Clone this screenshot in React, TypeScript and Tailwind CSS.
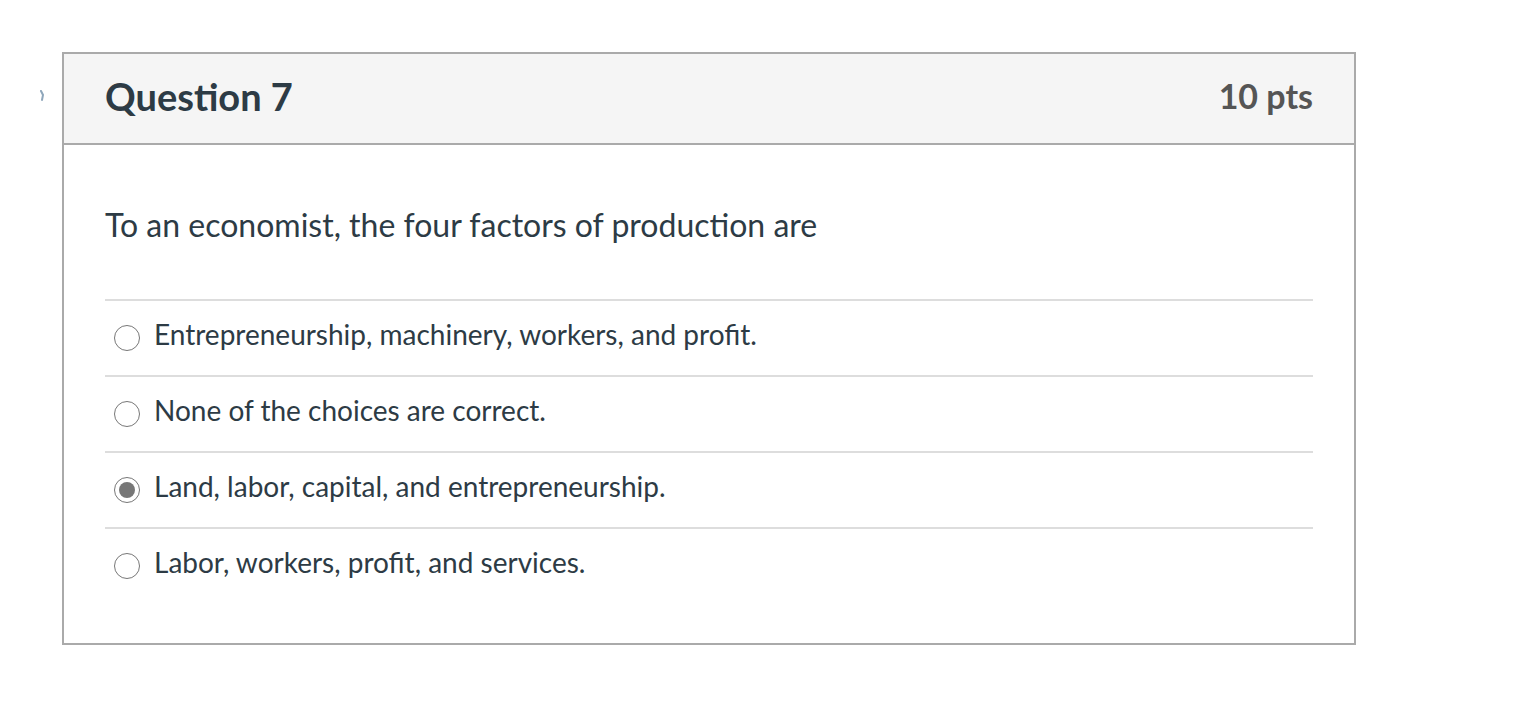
import { useState } from 'react'

const answers = [
  'Entrepreneurship, machinery, workers, and profit.',
  'None of the choices are correct.',
  'Land, labor, capital, and entrepreneurship.',
  'Labor, workers, profit, and services.',
]

export default function App() {
  const [selected, setSelected] = useState(2)

  return (
    <div className="min-h-screen bg-white pt-[52px] pl-[62px] font-['Lato','Liberation_Sans',sans-serif] text-[#2d3b45]">
      {/* tiny marker left of the card */}
      <svg className="absolute left-[38px] top-[90px]" width="8" height="14" viewBox="0 0 8 14">
        <path d="M3 1 L5 5 L4 10" stroke="#8ea6bb" strokeWidth="2" fill="none" strokeLinecap="round" />
      </svg>

      <div className="w-[1294px] border-2 border-[#aaaaaa]">
        {/* Header */}
        <div className="flex h-[91px] items-center justify-between border-b-2 border-[#aaaaaa] bg-[#f5f5f5] px-[41px] pb-[6px]">
          <h2 className="text-[38px] font-bold leading-none">Question 7</h2>
          <span className="text-[34px] font-bold leading-none text-[#555]">10 pts</span>
        </div>

        {/* Body */}
        <div className="px-[41px] pb-[40px] pt-[58px]">
          <p className="text-[32px] leading-[44px]">To an economist, the four factors of production are</p>

          <div className="mt-[52px]">
            {answers.map((a, i) => (
              <label
                key={i}
                onClick={() => setSelected(i)}
                className="flex h-[76px] cursor-pointer items-center border-t-2 border-[#dddddd] pl-[9px]"
              >
                <span className="flex h-[26px] w-[26px] shrink-0 items-center justify-center rounded-full border border-[#777] bg-white">
                  {selected === i && <span className="h-[16px] w-[16px] rounded-full bg-[#777]" />}
                </span>
                <span className="ml-[14px] pb-[9px] text-[28px] leading-none">{a}</span>
              </label>
            ))}
          </div>
        </div>
      </div>
    </div>
  )
}
